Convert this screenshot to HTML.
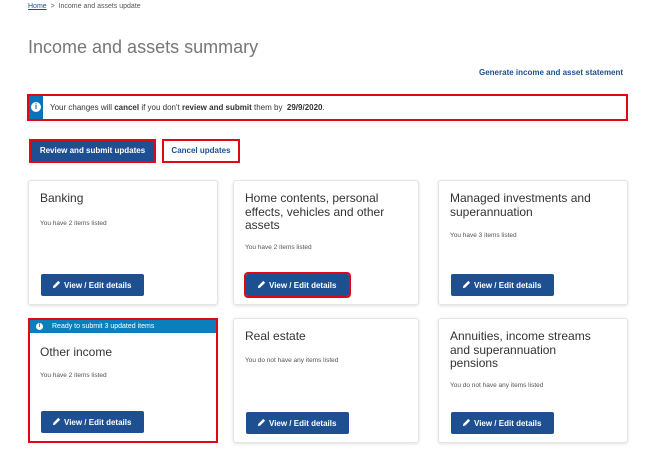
<!DOCTYPE html>
<html><head><style>
*{margin:0;padding:0;box-sizing:border-box}
body{width:650px;height:451px;background:#fff;font-family:"Liberation Sans",sans-serif;position:relative;overflow:hidden;color:#333}
.a{position:absolute}
.card{position:absolute;background:#fff;border:1px solid #e4e4e4;border-radius:3px;box-shadow:0 1px 3px rgba(0,0,0,.12)}
.t{position:absolute;left:11px;font-size:12px;line-height:13.5px;color:#333;width:153px}
.s{position:absolute;left:11px;font-size:6.5px;color:#555}
.btn{position:absolute;width:103px;height:22px;background:#1d4f91;border-radius:2px;color:#fff;font-size:8px;font-weight:bold;display:flex;align-items:center;padding-left:23px}
.btn svg{position:absolute;left:11px;top:6px}
</style></head><body>
<div class="a" style="left:28px;top:3px;font-size:7px;color:#555"><span style="color:#1d4f91;text-decoration:underline">Home</span> &nbsp;&gt;&nbsp; Income and assets update</div>
<div class="a" style="left:28px;top:37px;font-size:18px;color:#777">Income and assets summary</div>
<div class="a" style="left:479px;top:68px;font-size:8px;font-weight:bold;color:#1d4f91">Generate income and asset statement</div>
<div class="a" style="left:27px;top:94px;width:601px;height:27px;border:2px solid #e30613;background:#fff"></div>
<div class="a" style="left:29px;top:96px;width:14px;height:23px;background:#0a73b5"></div>
<div class="a" style="left:31px;top:102px;width:10px;height:10px;border-radius:50%;background:#fff;color:#0a73b5;font-size:8px;font-weight:bold;text-align:center;line-height:10px">i</div>
<div class="a" style="left:50px;top:103px;font-size:8px;color:#333">Your changes will <b>cancel</b> if you don't <b>review and submit</b> them by &nbsp;<b>29/9/2020</b>.</div>
<div class="a" style="left:29px;top:139px;width:127px;height:24px;border:2px solid #e30613;background:#1d4f91;color:#fff;font-size:8px;font-weight:bold;text-align:center;line-height:20px">Review and submit updates</div>
<div class="a" style="left:162px;top:139px;width:78px;height:24px;border:2px solid #e30613;background:#fff;color:#1d4f91;font-size:8px;font-weight:bold;text-align:center;line-height:20px">Cancel updates</div>

<div class="card" style="left:28px;top:180px;width:190px;height:125px"><div class="t" style="top:11px">Banking</div><div class="s" style="top:39px">You have 2 items listed</div><div class="btn" style="left:12px;top:93px"><svg width="9" height="9" viewBox="0 0 10 10"><path d="M1 9l.5-2.5L7 1l2 2-5.5 5.5z" fill="#fff"/></svg>View / Edit details</div></div>
<div class="card" style="left:233px;top:180px;width:186px;height:125px"><div class="t" style="top:11px">Home contents, personal effects, vehicles and other assets</div><div class="s" style="top:63px">You have 2 items listed</div><div class="btn" style="left:12px;top:93px;outline:2px solid #e30613"><svg width="9" height="9" viewBox="0 0 10 10"><path d="M1 9l.5-2.5L7 1l2 2-5.5 5.5z" fill="#fff"/></svg>View / Edit details</div></div>
<div class="card" style="left:438px;top:180px;width:190px;height:125px"><div class="t" style="top:11px">Managed investments and superannuation</div><div class="s" style="top:51px">You have 3 items listed</div><div class="btn" style="left:12px;top:93px"><svg width="9" height="9" viewBox="0 0 10 10"><path d="M1 9l.5-2.5L7 1l2 2-5.5 5.5z" fill="#fff"/></svg>View / Edit details</div></div>

<div class="a" style="left:28px;top:318px;width:190px;height:125px;border:2px solid #e30613;background:#fff">
<div class="a" style="left:0;top:0;width:186px;height:13px;background:#0a7fbc;color:#fff;font-size:7px;line-height:13px;padding-left:22px">Ready to submit 3 updated items</div>
<div class="a" style="left:6px;top:3px;width:7px;height:7px;border-radius:50%;background:#fff;color:#0a7fbc;font-size:6px;font-weight:bold;text-align:center;line-height:7px">i</div>
<div class="t" style="top:26px;left:10px">Other income</div><div class="s" style="top:52px;left:10px">You have 2 items listed</div><div class="btn" style="left:11px;top:91px"><svg width="9" height="9" viewBox="0 0 10 10"><path d="M1 9l.5-2.5L7 1l2 2-5.5 5.5z" fill="#fff"/></svg>View / Edit details</div></div>
<div class="card" style="left:233px;top:318px;width:186px;height:125px"><div class="t" style="top:11px">Real estate</div><div class="s" style="top:38px">You do not have any items listed</div><div class="btn" style="left:12px;top:93px"><svg width="9" height="9" viewBox="0 0 10 10"><path d="M1 9l.5-2.5L7 1l2 2-5.5 5.5z" fill="#fff"/></svg>View / Edit details</div></div>
<div class="card" style="left:438px;top:318px;width:190px;height:125px"><div class="t" style="top:11px;width:145px">Annuities, income streams and superannuation pensions</div><div class="s" style="top:63px">You do not have any items listed</div><div class="btn" style="left:12px;top:93px"><svg width="9" height="9" viewBox="0 0 10 10"><path d="M1 9l.5-2.5L7 1l2 2-5.5 5.5z" fill="#fff"/></svg>View / Edit details</div></div>
</body></html>
